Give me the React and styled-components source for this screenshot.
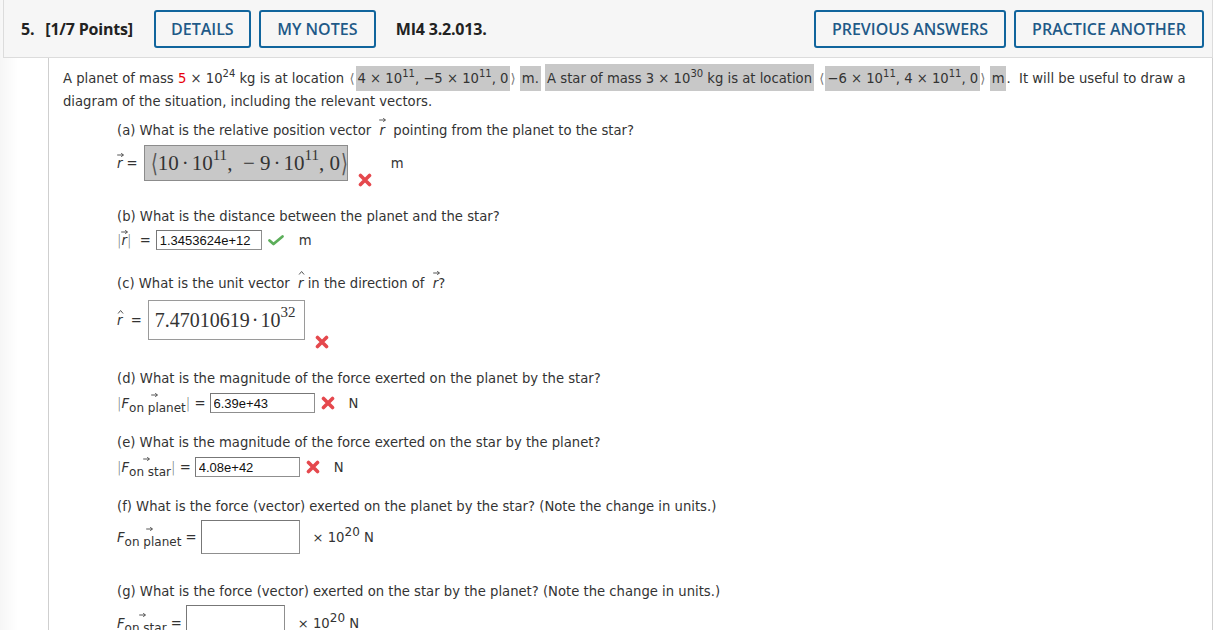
import React from "react";
import styled, { createGlobalStyle } from "styled-components";

const Global = createGlobalStyle`
  html, body { margin: 0; padding: 0; background: #fff; }
  body { font-family: "DejaVu Sans", Verdana, sans-serif; }
`;

const Page = styled.div`
  width: 1210px;
  padding-left: 3px;
  background: linear-gradient(to right, #f6f6f6 0px, #ffffff 18px);
`;

const Header = styled.header`
  display: flex;
  align-items: center;
  height: 57px;
  padding: 0 8px 0 17px;
  background: #f6f6f6;
  border: 1px solid #dcdcdc;
  border-top: none;
  font-family: "Open Sans", sans-serif;
  color: #222;
`;

const HeadText = styled.span`
  font-size: 16px;
  font-weight: 700;
  margin-right: ${(p) => p.$mr || 0}px;
  letter-spacing: -0.2px;
`;

const Spacer = styled.div`
  flex: 1;
`;

const HButton = styled.button`
  box-sizing: border-box;
  height: 38px;
  width: ${(p) => p.$w}px;
  margin-right: ${(p) => p.$mr || 0}px;
  border: 2px solid #11659d;
  border-radius: 3px;
  background: transparent;
  color: #1f5a88;
  font-family: "Open Sans", sans-serif;
  font-size: 16px;
  font-weight: 600;
  padding: 0;
  margin-top: 1px;
`;

const Body = styled.div`
  margin-left: 45px;
  border-left: 1px solid #cfcfcf;
  border-right: 1px solid #cfcfcf;
  padding: 9px 14px 0 14px;
  font-size: 13.2px;
  color: #333;
  height: 571px;
  overflow: hidden;
  background: #fff;
`;

const Statement = styled.p`
  margin: 0;
  line-height: 23px;
  white-space: nowrap;
`;

const Red = styled.span`
  color: #e8000b;
`;

const Sup = styled.sup`
  font-size: ${(p) => p.$fs || 10}px;
  vertical-align: ${(p) => p.$up || 6}px;
  line-height: 0;
`;

const Hl = styled.span`
  background: #c8c8c8;
  padding: ${(p) => p.$pt || 5}px 2px ${(p) => p.$pb || 5}px;
`;

const Ang = styled.span`
  color: #777;
  margin: 0 ${(p) => p.$m || 0}px;
`;

const Parts = styled.div`
  margin: 8px 0 0 54px;
`;

const Part = styled.section`
  margin-bottom: ${(p) => p.$mb}px;
`;

const Question = styled.div`
  line-height: 20px;
  white-space: nowrap;
`;

const Row = styled.div`
  display: flex;
  align-items: center;
  margin-top: ${(p) => p.$mt || 3}px;
  white-space: nowrap;
`;

const Label = styled.span`
  display: inline-flex;
  align-items: baseline;
  margin-right: ${(p) => p.$mr || 4}px;
`;

const VecWrap = styled.span`
  position: relative;
  display: inline-block;
  font-style: italic;
`;

const OverMark = styled.svg`
  position: absolute;
  left: 50%;
  top: ${(p) => p.$top || -4}px;
  transform: translateX(-40%);
  overflow: visible;
`;

const Sub = styled.span`
  font-size: 12px;
  position: relative;
  top: 4px;
  font-style: normal;
`;

const Bar = styled.span`
  color: #666;
  font-weight: 300;
`;

const MathBox = styled.div`
  box-sizing: border-box;
  display: flex;
  align-items: center;
  height: ${(p) => p.$h}px;
  width: ${(p) => p.$w}px;
  padding: 0 0 0 ${(p) => p.$pl || 5}px;
  border: 1px solid ${(p) => (p.$gray ? "#8c8c8c" : "#9a9a9a")};
  background: ${(p) => (p.$gray ? "#c8c8c8" : "#fff")};
  font-family: "Liberation Serif", "Times New Roman", serif;
  font-size: ${(p) => p.$fs || 20}px;
  color: #333;
  white-space: nowrap;
  overflow: hidden;
`;

const MSup = styled.span`
  font-size: 15px;
  position: relative;
  top: -8px;
`;

const Dot = styled.span`
  margin: 0 ${(p) => p.$m || 2}px;
`;

const Bracket = styled.span`
  font-size: 25px;
  color: #555;
  font-weight: 200;
  transform: scaleX(0.7);
  display: inline-block;
  margin: 0 -1px;
`;

const Field = styled.input`
  box-sizing: border-box;
  width: ${(p) => p.$w}px;
  height: ${(p) => p.$h || 20}px;
  border: 1px solid #8f8f8f;
  border-top-color: #777;
  border-left-color: #777;
  padding: 0 3px;
  font-family: "Liberation Sans", Arial, sans-serif;
  font-size: 13px;
  color: #111;
  background: #fff;
  outline: none;
`;

const Icon = styled.svg`
  flex: none;
  margin-left: ${(p) => p.$ml || 0}px;
  margin-right: ${(p) => p.$mr || 0}px;
  ${(p) =>
    p.$drop
      ? `align-self: flex-end; margin-bottom: -${p.$drop}px;`
      : ""}
`;

const Unit = styled.span`
  margin-left: ${(p) => p.$ml || 0}px;
`;

const Times = styled.span`
  font-size: 13px;
`;

function Vec({ children, sub }) {
  return (
    <VecWrap>
      {children}
      <OverMark width="7" height="4" viewBox="0 0 7 4" $top={-3}>
        <path d="M0 2 H6 M4 0.3 L6.3 2 L4 3.7" stroke="#444" strokeWidth="0.9" fill="none" />
      </OverMark>
      {sub && <Sub>{sub}</Sub>}
    </VecWrap>
  );
}

function HatR() {
  return (
    <VecWrap>
      r
      <OverMark width="6" height="4" viewBox="0 0 6 4" $top={-3}>
        <path d="M0.5 3.5 L3 0.5 L5.5 3.5" stroke="#444" strokeWidth="0.9" fill="none" />
      </OverMark>
    </VecWrap>
  );
}

function XIcon(props) {
  return (
    <Icon width="14" height="14" viewBox="0 0 14 14" {...props}>
      <path d="M2.5 2.5 L11.5 11.5 M11.5 2.5 L2.5 11.5" stroke="#e5484d" strokeWidth="3.6" strokeLinecap="round" />
    </Icon>
  );
}

function CheckIcon(props) {
  return (
    <Icon width="18" height="14" viewBox="0 0 18 14" {...props}>
      <path d="M2.5 7.5 L6.5 11 L15.5 3.5" stroke="#5cae5a" strokeWidth="2.8" strokeLinecap="round" strokeLinejoin="round" fill="none" />
    </Icon>
  );
}

function FLabel({ sub, bars }) {
  return (
    <Label $mr={4}>
      {bars && <Bar>|</Bar>}
      <Vec sub={sub}>F</Vec>
      {bars && <Bar>|</Bar>}
      &nbsp;=
    </Label>
  );
}

export default function App() {
  return (
    <>
      <Global />
      <Page>
        <Header>
          <HeadText $mr={11}>5.</HeadText>
          <HeadText $mr={21}>[1/7 Points]</HeadText>
          <HButton $w={97} $mr={8}>DETAILS</HButton>
          <HButton $w={117} $mr={20}>MY NOTES</HButton>
          <HeadText>MI4 3.2.013.</HeadText>
          <Spacer />
          <HButton $w={192} $mr={8}>PREVIOUS ANSWERS</HButton>
          <HButton $w={190}>PRACTICE ANOTHER</HButton>
        </Header>
        <Body>
          <Statement>
            A planet of mass <Red>5</Red> × 10<Sup>24</Sup> kg is at location{" "}
            <Ang $m={1}>⟨</Ang>
            <Hl>4 × 10<Sup>11</Sup>, −5 × 10<Sup>11</Sup>, 0</Hl>
            <Ang>⟩</Ang> <Hl>m.</Hl> <Hl $pt={7}>A star of mass 3 × 10<Sup>30</Sup> kg is at location</Hl>{" "}
            <Ang $m={1}>⟨</Ang>
            <Hl>−6 × 10<Sup>11</Sup>, 4 × 10<Sup>11</Sup>, 0</Hl>
            <Ang>⟩</Ang> <Hl>m</Hl>.&nbsp; It will be useful to draw a
            <br />
            diagram of the situation, including the relevant vectors.
          </Statement>
          <Parts>
            <Part $mb={26}>
              <Question>
                (a) What is the relative position vector&nbsp; <Vec>r</Vec>&nbsp; pointing from the planet to the star?
              </Question>
              <Row $mt={4}>
                <Label $mr={6}>
                  <Vec>r</Vec>&nbsp;=
                </Label>
                <MathBox $gray $w={204} $h={36} $fs={21}>
                  <Bracket>⟨</Bracket>10<Dot $m={3}>·</Dot>10<MSup>11</MSup>,&nbsp; −&nbsp;9<Dot $m={3}>·</Dot>10
                  <MSup>11</MSup>, 0<Bracket>⟩</Bracket>
                </MathBox>
                <XIcon $ml={10} $drop={6} />
                <Unit $ml={19}>m</Unit>
              </Row>
            </Part>

            <Part $mb={24}>
              <Question>(b) What is the distance between the planet and the star?</Question>
              <Row $mt={3}>
                <Label $mr={5}>
                  <Bar>|</Bar>
                  <Vec>r</Vec>
                  <Bar>|</Bar>&nbsp;&nbsp;=
                </Label>
                <Field $w={106} readOnly defaultValue="1.3453624e+12" />
                <CheckIcon $ml={5} />
                <Unit $ml={14}>m</Unit>
              </Row>
            </Part>

            <Part $mb={29}>
              <Question>
                (c) What is the unit vector&nbsp; <HatR /> in the direction of&nbsp; <Vec>r</Vec>?
              </Question>
              <Row $mt={6}>
                <Label $mr={6}>
                  <HatR />&nbsp;&nbsp;=
                </Label>
                <MathBox $w={157} $h={40} $pl={6}>
                  7.47010619<Dot>·</Dot>10<MSup>32</MSup>
                </MathBox>
                <XIcon $ml={10} $drop={9} />
              </Row>
            </Part>

            <Part $mb={20}>
              <Question>(d) What is the magnitude of the force exerted on the planet by the star?</Question>
              <Row $mt={4}>
                <FLabel bars sub="on planet" />
                <Field $w={105} readOnly defaultValue="6.39e+43" />
                <XIcon $ml={6} />
                <Unit $ml={14}>N</Unit>
              </Row>
            </Part>

            <Part $mb={20}>
              <Question>(e) What is the magnitude of the force exerted on the star by the planet?</Question>
              <Row $mt={4}>
                <FLabel bars sub="on star" />
                <Field $w={105} readOnly defaultValue="4.08e+42" />
                <XIcon $ml={6} />
                <Unit $ml={14}>N</Unit>
              </Row>
            </Part>

            <Part $mb={28}>
              <Question>(f) What is the force (vector) exerted on the planet by the star? (Note the change in units.)</Question>
              <Row $mt={3}>
                <FLabel sub="on planet" />
                <Field $w={99} $h={34} readOnly defaultValue="" />
                <Unit $ml={13}>
                  <Times>×</Times> 10<Sup $fs={12}>20</Sup> N
                </Unit>
              </Row>
            </Part>

            <Part $mb={0}>
              <Question>(g) What is the force (vector) exerted on the star by the planet? (Note the change in units.)</Question>
              <Row $mt={3}>
                <FLabel sub="on star" />
                <Field $w={99} $h={36} readOnly defaultValue="" />
                <Unit $ml={13}>
                  <Times>×</Times> 10<Sup $fs={12}>20</Sup> N
                </Unit>
              </Row>
            </Part>
          </Parts>
        </Body>
      </Page>
    </>
  );
}
